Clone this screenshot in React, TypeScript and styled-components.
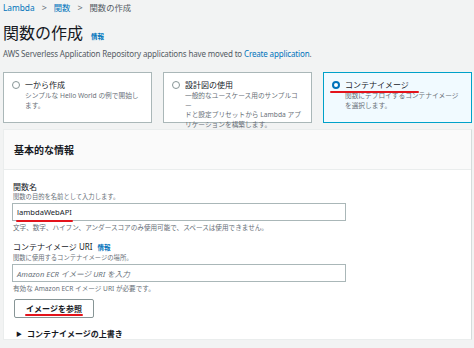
import styled, { createGlobalStyle } from "styled-components"

const GlobalStyle = createGlobalStyle`
  html, body {
    margin: 0;
    background: #f2f3f3;
    font-family: "Noto Sans", "Noto Sans CJK JP", sans-serif;
    color: #16191f;
  }
`

const cards = [
  {
    title: "一から作成",
    desc: ["シンプルな Hello World の例で開始し", "ます。"],
    selected: false,
  },
  {
    title: "設計図の使用",
    desc: ["一般的なユースケース用のサンプルコー", "ドと設定プリセットから Lambda アプ", "リケーションを構築します。"],
    selected: false,
  },
  {
    title: "コンテナイメージ",
    desc: ["関数にデプロイするコンテナイメージ", "を選択します。"],
    selected: true,
  },
]

export default function App() {
  return (
    <Page>
      <GlobalStyle />
      <Breadcrumb>
        <Link>Lambda</Link>
        <Sep>&gt;</Sep>
        <Link>関数</Link>
        <Sep>&gt;</Sep>
        <span>関数の作成</span>
      </Breadcrumb>
      <TitleRow>
        <Title>関数の作成</Title>
        <Info>情報</Info>
      </TitleRow>
      <Subtitle>
        AWS Serverless Application Repository applications have moved to <Link>Create application</Link>.
      </Subtitle>

      <Cards>
        {cards.map((card) => (
          <Card key={card.title} $selected={card.selected}>
            <CardHead>
              {card.selected ? (
                <Marked $left={-2} $right={-10} $bottom={-2}>
                  <Radio $checked />
                  <CardTitle>{card.title}</CardTitle>
                </Marked>
              ) : (
                <>
                  <Radio />
                  <CardTitle>{card.title}</CardTitle>
                </>
              )}
            </CardHead>
            <CardDesc>
              {card.desc.map((line) => (
                <div key={line}>{line}</div>
              ))}
            </CardDesc>
          </Card>
        ))}
      </Cards>

      <Panel>
        <PanelHeader>基本的な情報</PanelHeader>
        <PanelBody>
          <Field>
            <Label>関数名</Label>
            <Desc>関数の目的を名前として入力します。</Desc>
            <Input>
              <Marked $left={-1} $right={-1} $bottom={-5}>
                lambdaWebAPI
              </Marked>
            </Input>
            <Hint>文字、数字、ハイフン、アンダースコアのみ使用可能で、スペースは使用できません。</Hint>
          </Field>

          <Field>
            <Label>
              コンテナイメージ URI <Info>情報</Info>
            </Label>
            <Desc>関数に使用するコンテナイメージの場所。</Desc>
            <Input $placeholder>Amazon ECR イメージ URI を入力</Input>
            <Hint>有効な Amazon ECR イメージ URI が必要です。</Hint>
          </Field>

          <Button>
            <Marked $left={-1} $right={-1} $bottom={-2}>
              イメージを参照
            </Marked>
          </Button>

          <Expander>
            <Caret>▶</Caret>
            コンテナイメージの上書き
          </Expander>
        </PanelBody>
      </Panel>
    </Page>
  )
}

const Page = styled.div`
  padding: 0 2px 0 3px;
  height: 348px;
  overflow: hidden;
`

const Breadcrumb = styled.div`
  display: flex;
  align-items: center;
  gap: 7px;
  height: 14px;
  font-size: 8.3px;
  color: #545b64;
`

const Link = styled.span`
  color: #0073bb;
`

const Sep = styled.span`
  color: #687078;
  font-size: 9px;
`

const TitleRow = styled.div`
  display: flex;
  align-items: baseline;
  gap: 8px;
  margin-top: 9px;
  height: 20px;
`

const Title = styled.h1`
  margin: 0;
  font-size: 16px;
  font-weight: 400;
  line-height: 20px;
`

const Info = styled.span`
  color: #0073bb;
  font-size: 6.5px;
  font-weight: 700;
`

const Subtitle = styled.div`
  margin-top: 5px;
  font-size: 8px;
  letter-spacing: -0.15px;
  line-height: 12px;
  color: #545b64;
`

const Cards = styled.div`
  display: grid;
  grid-template-columns: repeat(3, 1fr);
  gap: 11px;
  margin-top: 12px;
`

const Card = styled.div<{ $selected?: boolean }>`
  height: 51px;
  box-sizing: border-box;
  padding: 6px 8px 0 8px;
  border: 1px solid ${(p) => (p.$selected ? "#00a1c9" : "#aab7b8")};
  background: ${(p) => (p.$selected ? "#f1faff" : "#ffffff")};
`

const CardHead = styled.div`
  display: flex;
  align-items: center;
  height: 12px;
`

const Marked = styled.span<{ $left: number; $right: number; $bottom: number }>`
  position: relative;
  display: inline-flex;
  align-items: center;

  &::after {
    content: "";
    position: absolute;
    left: ${(p) => p.$left}px;
    right: ${(p) => p.$right}px;
    bottom: ${(p) => p.$bottom}px;
    height: 2px;
    border-radius: 1px;
    background: #e3131b;
  }
`

const Radio = styled.span<{ $checked?: boolean }>`
  width: 8px;
  height: 8px;
  box-sizing: border-box;
  border-radius: 50%;
  border: ${(p) => (p.$checked ? "2.5px solid #0073bb" : "1px solid #879596")};
  background: #fff;
  margin-right: 5px;
  flex-shrink: 0;
`

const CardTitle = styled.span`
  font-size: 8px;
  line-height: 12px;
`

const CardDesc = styled.div`
  padding-left: 13px;
  font-size: 6.7px;
  line-height: 9.5px;
  color: #687078;
`

const Panel = styled.div`
  margin-top: 6px;
  background: #fff;
  border: 1px solid #eaeded;
  border-right-color: #d5dbdb;
`

const PanelHeader = styled.div`
  height: 40px;
  box-sizing: border-box;
  padding-left: 10px;
  display: flex;
  align-items: center;
  background: #fafafa;
  border-bottom: 1px solid #eaeded;
  font-size: 10px;
  font-weight: 700;
`

const PanelBody = styled.div`
  padding: 11px 0 0 9px;
`

const Field = styled.div`
  margin-bottom: 9px;
`

const Label = styled.div`
  font-size: 8px;
  line-height: 11px;
  display: flex;
  align-items: baseline;
  gap: 5px;
`

const Desc = styled.div`
  font-size: 6.3px;
  line-height: 9px;
  color: #687078;
`

const Input = styled.div<{ $placeholder?: boolean }>`
  width: 334px;
  height: 18px;
  box-sizing: border-box;
  margin: 2px 0 0 -1px;
  padding-left: 4px;
  border: 1px solid #aab7b8;
  display: flex;
  align-items: center;
  font-size: 7.6px;
  color: ${(p) => (p.$placeholder ? "#687078" : "#16191f")};
  font-style: ${(p) => (p.$placeholder ? "italic" : "normal")};
`

const Hint = styled.div`
  margin-top: 2px;
  font-size: 6.6px;
  line-height: 9px;
  color: #687078;
`

const Button = styled.div`
  width: 80px;
  height: 19px;
  box-sizing: border-box;
  margin: -3px 0 0 1px;
  border: 1px solid #879596;
  border-radius: 2px;
  background: #fff;
  display: flex;
  align-items: center;
  justify-content: center;
  font-size: 8px;
  font-weight: 700;
  color: #16191f;
`

const Expander = styled.div`
  margin-top: 10px;
  display: flex;
  align-items: center;
  gap: 5px;
  padding-left: 3px;
  font-size: 8px;
  font-weight: 700;
  color: #16191f;
`

const Caret = styled.span`
  font-size: 6px;
`
